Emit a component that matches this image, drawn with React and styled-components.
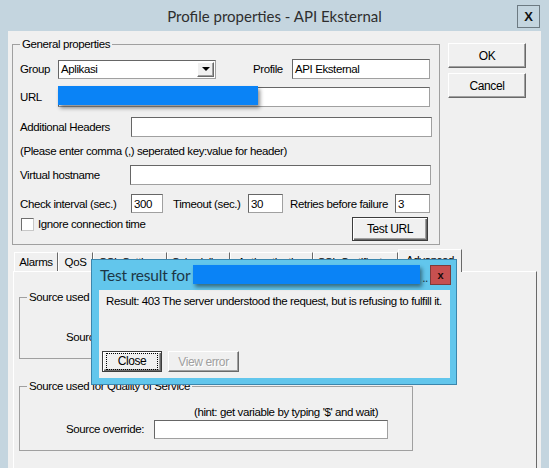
import styled, { createGlobalStyle } from "styled-components";

const GlobalStyle = createGlobalStyle`
  html, body {
    margin: 0;
    padding: 0;
  }
  body {
    font-family: "Liberation Sans", Arial, sans-serif;
    font-size: 11.5px;
    letter-spacing: -0.4px;
    color: #000;
    background: #c4d5df;
  }
`;

const Window = styled.div`
  position: relative;
  width: 549px;
  height: 468px;
  overflow: hidden;
  background: #c4d5df;
  display: flex;
  flex-direction: column;
`;

const TitleBar = styled.div`
  height: 31px;
  flex: none;
  display: grid;
  grid-template-columns: 1fr auto 1fr;
  align-items: center;
`;

const TitleText = styled.div`
  grid-column: 2;
  font-family: Lato, "Liberation Sans", sans-serif;
  font-size: 15px;
  letter-spacing: 0;
  color: #2e2e2e;
`;

const WinClose = styled.div`
  grid-column: 3;
  justify-self: end;
  margin-right: 9px;
  margin-top: 1px;
  width: 23px;
  height: 23px;
  box-sizing: border-box;
  border: 1px solid #6d7a82;
  display: flex;
  align-items: center;
  justify-content: center;
  font: bold 13px "Liberation Sans", sans-serif;
  letter-spacing: 0;
  color: #111;
`;

const Client = styled.div`
  flex: 1;
  margin: 0 8px;
  background: #f0f0f0;
  padding: 6px 0 0 4px;
`;

const TopSection = styled.div`
  display: flex;
  align-items: flex-start;
  gap: 8px;
`;

const GroupBox = styled.fieldset`
  margin: 0;
  width: ${(p) => p.$w}px;
  box-sizing: border-box;
  min-width: 0;
  border: 1px solid #a0a0a0;
  padding: ${(p) => p.$pt}px 7px ${(p) => p.$pb}px 7px;
`;

const Legend = styled.legend`
  padding: 0 2px;
  line-height: 14px;
`;

const Row = styled.div`
  display: flex;
  align-items: ${(p) => p.$align || "center"};
  height: ${(p) => p.$h || 20}px;
  margin-top: ${(p) => p.$mt || 0}px;
`;

const Label = styled.span`
  flex: none;
  width: ${(p) => (p.$w ? `${p.$w}px` : "auto")};
  margin-left: ${(p) => p.$ml || 0}px;
  margin-right: ${(p) => p.$mr || 0}px;
  text-align: ${(p) => p.$align || "left"};
  white-space: nowrap;
`;

const Field = styled.div`
  flex: none;
  box-sizing: border-box;
  width: ${(p) => p.$w}px;
  height: ${(p) => p.$h || 20}px;
  background: #fff;
  border: 1px solid;
  border-color: #666 #a0a0a0 #a0a0a0 #666;
  padding: 0 2px;
  display: flex;
  align-items: center;
  white-space: nowrap;
  overflow: hidden;
`;

const Combo = styled(Field)`
  padding: 0 1px 0 2px;
`;

const ComboText = styled.span`
  flex: 1;
`;

const ComboArrow = styled.div`
  width: 17px;
  height: 15px;
  box-sizing: border-box;
  background: #f0f0f0;
  border: 1px solid;
  border-color: #fff #696969 #696969 #fff;
  box-shadow: inset -1px -1px 0 #a0a0a0;
  display: flex;
  align-items: center;
  justify-content: center;

  &::after {
    content: "";
    border-left: 4px solid transparent;
    border-right: 4px solid transparent;
    border-top: 4px solid #000;
  }
`;

const Hint = styled.div`
  height: 14px;
  line-height: 14px;
  margin-top: ${(p) => p.$mt || 0}px;
  margin-left: ${(p) => p.$ml || 0}px;
  white-space: nowrap;
`;

const CheckRow = styled.div`
  display: flex;
  align-items: center;
  gap: 4px;
  margin-left: 1px;
  height: 14px;
`;

const CheckBox = styled.div`
  width: 13px;
  height: 13px;
  box-sizing: border-box;
  background: #fff;
  border: 1px solid;
  border-color: #6e6e6e #c8c8c8 #c8c8c8 #6e6e6e;
`;

const Button = styled.div`
  flex: none;
  box-sizing: border-box;
  width: ${(p) => p.$w}px;
  height: ${(p) => p.$h}px;
  margin-left: ${(p) => (p.$ml === "auto" ? "auto" : `${p.$ml || 0}px`)};
  margin-right: ${(p) => p.$mr || 0}px;
  background: #f0f0f0;
  border: 1px solid;
  border-color: ${(p) =>
    p.$default ? "#3c3c3c" : "#ffffff #696969 #696969 #ffffff"};
  box-shadow: ${(p) =>
    p.$default
      ? "inset 1px 1px 0 #fff, inset -1px -1px 0 #696969, inset -2px -2px 0 #a0a0a0"
      : "inset -1px -1px 0 #a0a0a0"};
  display: flex;
  align-items: center;
  justify-content: center;
  font-size: 12px;
  color: ${(p) => (p.$disabled ? "#a0a0a0" : "#000")};
  text-shadow: ${(p) => (p.$disabled ? "1px 1px 0 #fff" : "none")};
`;

const FocusRect = styled.span`
  border: 1px dotted #000;
  padding: 1px 11px;
  line-height: 13px;
`;

const SideButtons = styled.div`
  display: flex;
  flex-direction: column;
  gap: 5px;
  margin-top: 6px;
`;

const TabStrip = styled.div`
  display: flex;
  align-items: flex-end;
  height: 22px;
  margin: 4px 0 0 2px;
`;

const Tab = styled.div`
  flex: none;
  width: ${(p) => p.$w}px;
  height: ${(p) => (p.$active ? 23 : 19)}px;
  margin-bottom: ${(p) => (p.$active ? -1 : 0)}px;
  box-sizing: border-box;
  background: #f0f0f0;
  border-top: 1px solid #fff;
  border-left: 1px solid #fff;
  border-right: 1px solid #696969;
  position: relative;
  z-index: ${(p) => (p.$active ? 1 : 0)};
  display: flex;
  align-items: center;
  justify-content: center;
  padding-bottom: ${(p) => (p.$active ? 3 : 1)}px;
  white-space: nowrap;
`;

const TabPanel = styled.div`
  margin-left: 1px;
  width: 524px;
  height: 220px;
  box-sizing: border-box;
  border: 1px solid;
  border-color: #fff #696969 #696969 #fff;
  padding: 18px 0 0 5px;
`;

const GroupGap = styled.div`
  height: 20px;
`;

const Redact = styled.div`
  position: absolute;
  left: ${(p) => p.$x}px;
  top: ${(p) => p.$y}px;
  width: ${(p) => p.$w}px;
  height: ${(p) => p.$h}px;
  background: #0a83f6;
  box-shadow: 2px 3px 4px rgba(0, 0, 0, 0.45);
  z-index: 5;
`;

const Dialog = styled.div`
  position: absolute;
  left: 91px;
  top: 259px;
  width: 366px;
  height: 126px;
  box-sizing: border-box;
  background: #62c6ec;
  border: 1px solid #3b86ad;
  padding: 0 6px 6px 7px;
  display: flex;
  flex-direction: column;
  z-index: 4;
`;

const DialogTitle = styled.div`
  height: 30px;
  flex: none;
  display: flex;
  align-items: center;
  justify-content: space-between;
`;

const DialogTitleText = styled.span`
  font-family: Lato, "Liberation Sans", sans-serif;
  font-size: 15.5px;
  letter-spacing: -0.2px;
  color: #1c3646;
  padding-left: 1px;
`;

const DialogTitleRight = styled.div`
  display: flex;
  align-items: center;
  gap: 2px;
`;

const Dots = styled.span`
  font-size: 12px;
  color: #1c3646;
  margin-top: 6px;
`;

const RedClose = styled.div`
  width: 21px;
  height: 20px;
  box-sizing: border-box;
  background: #c75050;
  border: 1px solid #7e3b3b;
  display: flex;
  align-items: center;
  justify-content: center;
  font: bold 11px "Liberation Sans", sans-serif;
  letter-spacing: 0;
  color: #1a0a0a;
  margin-right: -1px;
`;

const DialogBody = styled.div`
  flex: 1;
  background: #f0f0f0;
  padding: 3px 3px 6px 7px;
  display: flex;
  flex-direction: column;
  justify-content: space-between;
`;

const ResultText = styled.div`
  line-height: 16px;
  white-space: nowrap;
`;

const DialogButtons = styled.div`
  display: flex;
  gap: 6px;
  margin-left: -4px;
`;

const SourceGroup = ({ title, pt }) => (
  <GroupBox $w={394} $pt={pt} $pb={12}>
    <Legend>{title}</Legend>
    <Hint $ml={167}>(hint: get variable by typing '$' and wait)</Hint>
    <Row $h={18} $mt={1}>
      <Label $w={117} $mr={10} $align="right">
        Source override:
      </Label>
      <Field $w={234} $h={19} />
    </Row>
  </GroupBox>
);

const tabs = [
  { name: "Alarms", w: 44 },
  { name: "QoS", w: 35 },
  { name: "SSL Settings", w: 74 },
  { name: "Scheduling", w: 63 },
  { name: "Authentication", w: 83 },
  { name: "SSL Certificates", w: 85 },
  { name: "Advanced", w: 64, active: true },
];

export default function App() {
  return (
    <Window>
      <GlobalStyle />
      <TitleBar>
        <TitleText>Profile properties - API Eksternal</TitleText>
        <WinClose>X</WinClose>
      </TitleBar>
      <Client>
        <TopSection>
          <GroupBox $w={428} $pt={8} $pb={3}>
            <Legend>General properties</Legend>
            <Row>
              <Label $w={38}>Group</Label>
              <Combo $w={158} $h={19}>
                <ComboText>Aplikasi</ComboText>
                <ComboArrow />
              </Combo>
              <Label $w={39} $ml={37}>
                Profile
              </Label>
              <Field $w={138}>API Eksternal</Field>
            </Row>
            <Row $mt={8}>
              <Label $w={38}>URL</Label>
              <Field $w={372} />
            </Row>
            <Row $mt={10}>
              <Label $w={111}>Additional Headers</Label>
              <Field $w={301} />
            </Row>
            <Hint $mt={7}>
              (Please enter comma (,) seperated key:value for header)
            </Hint>
            <Row $mt={7}>
              <Label $w={110}>Virtual hostname</Label>
              <Field $w={301} />
            </Row>
            <Row $mt={9} $h={19}>
              <Label $w={111}>Check interval (sec.)</Label>
              <Field $w={32} $h={19}>300</Field>
              <Label $w={75} $ml={10}>
                Timeout (sec.)
              </Label>
              <Field $w={35} $h={19}>30</Field>
              <Label $w={105} $ml={7}>
                Retries before failure
              </Label>
              <Field $w={35} $h={19}>3</Field>
            </Row>
            <Row $h={24} $mt={4} $align="flex-start">
              <CheckRow>
                <CheckBox />
                <span>Ignore connection time</span>
              </CheckRow>
              <Button $default $w={76} $h={24} $ml="auto" $mr={4}>
                Test URL
              </Button>
            </Row>
          </GroupBox>
          <SideButtons>
            <Button $w={78} $h={25}>
              OK
            </Button>
            <Button $w={78} $h={25}>
              Cancel
            </Button>
          </SideButtons>
        </TopSection>

        <TabStrip>
          {tabs.map((t) => (
            <Tab key={t.name} $w={t.w} $active={t.active}>
              {t.name}
            </Tab>
          ))}
        </TabStrip>
        <TabPanel>
          <SourceGroup title="Source used for Availability" pt={9} />
          <GroupGap />
          <SourceGroup title="Source used for Quality of Service" pt={12} />
        </TabPanel>
      </Client>

      <Redact $x={58} $y={86} $w={200} $h={19} />

      <Dialog>
        <Redact $x={101} $y={5} $w={227} $h={19} />
        <DialogTitle>
          <DialogTitleText>Test result for</DialogTitleText>
          <DialogTitleRight>
            <Dots>..</Dots>
            <RedClose>x</RedClose>
          </DialogTitleRight>
        </DialogTitle>
        <DialogBody>
          <ResultText>
            Result: 403 The server understood the request, but is refusing to
            fulfill it.
          </ResultText>
          <DialogButtons>
            <Button $default $w={60} $h={21}>
              <FocusRect>Close</FocusRect>
            </Button>
            <Button $w={71} $h={21} $disabled>
              View error
            </Button>
          </DialogButtons>
        </DialogBody>
      </Dialog>
    </Window>
  );
}
